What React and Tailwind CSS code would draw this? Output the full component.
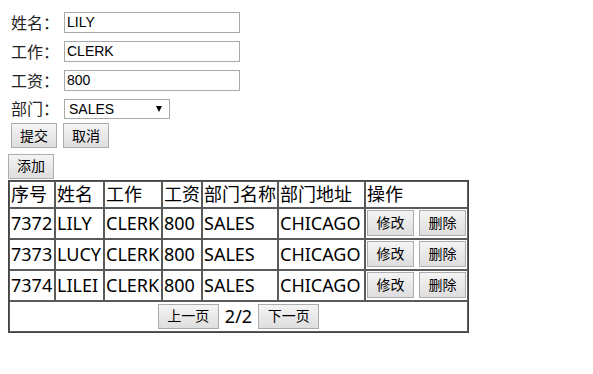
const rows = [
  { id: "7372", name: "LILY" },
  { id: "7373", name: "LUCY" },
  { id: "7374", name: "LILEI" },
];

const cjk = "font-['Noto_Sans','Noto_Sans_CJK_SC',sans-serif]";

const Btn = ({ children, className = "" }) => (
  <button
    className={`h-[25px] border border-[#adadad] bg-gradient-to-b from-[#f4f4f4] to-[#dedede] text-[14px] leading-none text-black ${cjk} ${className}`}
  >
    {children}
  </button>
);

const Field = ({ label, value }) => (
  <div className="flex items-center h-[21px] mb-[8px] pl-[3px]">
    <span className={`w-[53px] text-[16px] text-[#222] ${cjk}`}>{label}：</span>
    <input
      defaultValue={value}
      className="w-[176px] h-[21px] border border-[#a9a9a9] px-[2px] text-[14px] text-black font-['Liberation_Sans',Arial,sans-serif] outline-none"
    />
  </div>
);

const cell = "border border-[#5a5a5a] p-[1px] align-middle whitespace-nowrap";

const App = () => {
  return (
    <div className="bg-white min-h-[374px] pt-[12px] pl-[8px] text-black">
      <Field label="姓名" value="LILY" />
      <Field label="工作" value="CLERK" />
      <Field label="工资" value="800" />
      <div className="flex items-center h-[20px] mt-[8px] pl-[3px]">
        <span className={`w-[53px] text-[16px] text-[#222] ${cjk}`}>部门：</span>
        <div className="relative w-[106px] h-[20px]">
          <select
            defaultValue="SALES"
            className="appearance-none block w-full h-full border border-[#a9a9a9] bg-white pl-[4px] py-0 text-[14px] leading-[18px] font-['Liberation_Sans',Arial,sans-serif] outline-none"
          >
            <option>SALES</option>
            <option>ACCOUNTING</option>
            <option>RESEARCH</option>
          </select>
          <span className="absolute right-[8px] top-[7px] w-0 h-0 border-l-[3px] border-r-[3px] border-t-[6px] border-l-transparent border-r-transparent border-t-black pointer-events-none" />
        </div>
      </div>
      <div className="flex gap-[6px] mt-[4px] pl-[3px]">
        <Btn className="w-[46px]">提交</Btn>
        <Btn className="w-[46px]">取消</Btn>
      </div>
      <div className="mt-[5px]">
        <Btn className="w-[46px]">添加</Btn>
      </div>
      <table
        className={`mt-[1px] border-separate border-spacing-0 border border-[#444] text-[18px] leading-none ${cjk}`}
      >
        <thead>
          <tr className="h-[27px]">
            <td className={`${cell} w-[46px]`}>序号</td>
            <td className={`${cell} w-[49px]`}>姓名</td>
            <td className={`${cell} w-[58px]`}>工作</td>
            <td className={`${cell} w-[39px]`}>工资</td>
            <td className={`${cell} w-[76px]`}>部门名称</td>
            <td className={`${cell} w-[87px]`}>部门地址</td>
            <td className={`${cell} w-[103px]`}>操作</td>
          </tr>
        </thead>
        <tbody>
          {rows.map((r, i) => (
            <tr key={r.id} className="h-[31px]">
              <td className={cell}>{r.id}</td>
              <td className={cell}>{r.name}</td>
              <td className={cell}>CLERK</td>
              <td className={cell}>800</td>
              <td className={cell}>SALES</td>
              <td className={cell}>CHICAGO</td>
              <td className={cell}>
                <div className="flex gap-[5px]">
                  <Btn className={`w-[47px] h-[26px] ${i === 0 ? "border-[#569de5]" : ""}`}>修改</Btn>
                  <Btn className="w-[47px] h-[26px]">删除</Btn>
                </div>
              </td>
            </tr>
          ))}
          <tr className="h-[31px]">
            <td colSpan={7} className={`${cell} text-center`}>
              <div className="flex items-center justify-center gap-[6px]">
                <Btn className="w-[61px]">上一页</Btn>
                <span className="text-[18px]">2/2</span>
                <Btn className="w-[61px]">下一页</Btn>
              </div>
            </td>
          </tr>
        </tbody>
      </table>
    </div>
  );
};

export default App;
